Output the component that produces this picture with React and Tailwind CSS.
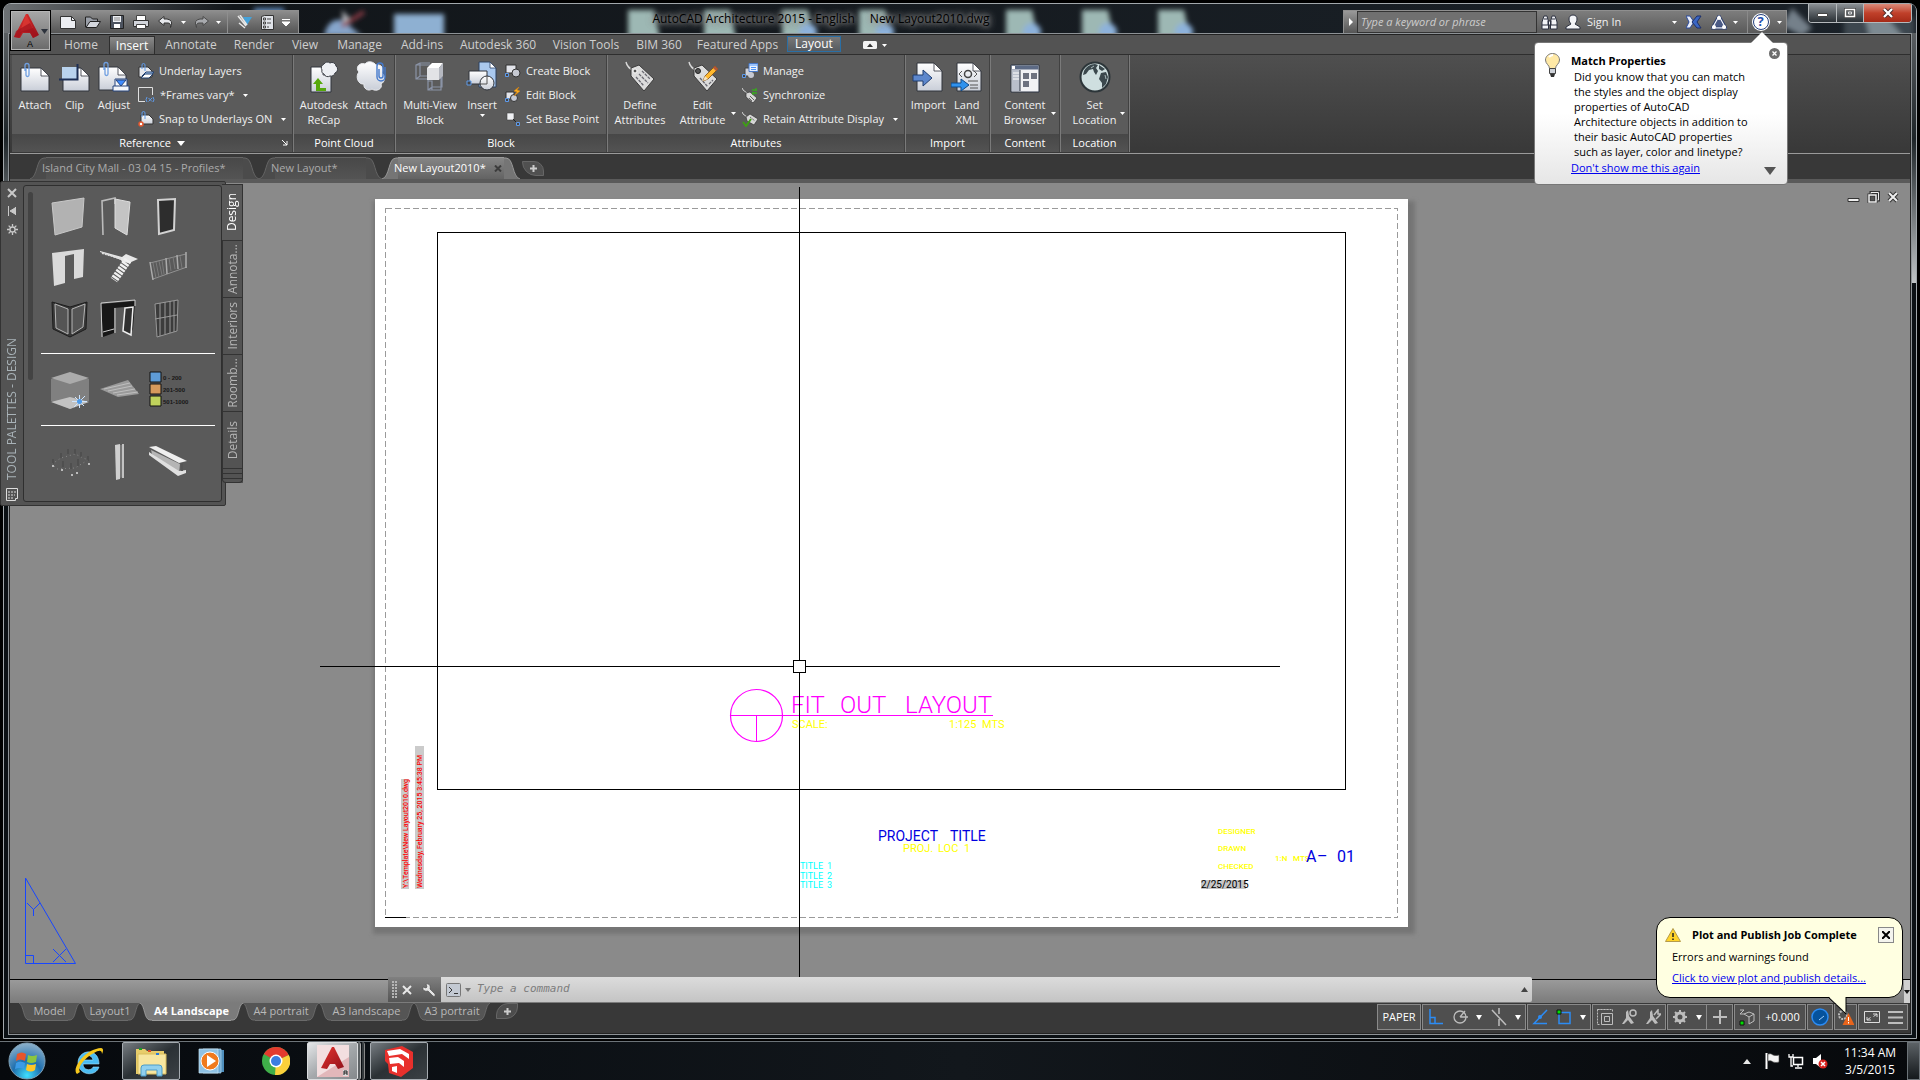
import React from "react";

function Icon({ w = 16, h, vb, children, className = "" }) {
  const hh = h || w;
  return (
    <svg width={w} height={hh} viewBox={vb || `0 0 ${w} ${hh}`} fill="none" aria-hidden="true" className={`shrink-0 ${className}`}>
      {children}
    </svg>
  );
}

const Caret = ({ className = "" }) => (
  <Icon w={5} h={3} className={className}>
    <path d="M0 0h5L2.500 3z" fill="#fff" />
  </Icon>
);

const Page = ({ x = 0, y = 0, w = 28, h = 23, fill = "url(#pageFill)" }) => (
  <g transform={`translate(${x} ${y})`}>
    <path d={`M0 0h${w - 8}l8 8v${h - 8}H0z`} fill={fill} stroke="#30343c" />
    <path d={`M${w - 8} 0v8h8z`} fill="#fff" stroke="#30343c" strokeWidth=".8" />
  </g>
);

const Clip = ({ x = 0, y = 0, c = "#6f9fe0" }) => (
  <path transform={`translate(${x} ${y})`} d="M0 8V2.500a2 2 0 0 1 4 0V12a1.500 1.500 0 0 1-3 0V5" stroke={c} strokeWidth="1.300" />
);

function Defs() {
  return (
    <svg width="0" height="0" className="absolute" aria-hidden="true">
      <defs>
        <linearGradient id="pageFill" x1="0" y1="0" x2="0" y2="1">
          <stop offset="0" stopColor="#fff" />
          <stop offset="1" stopColor="#c9ced8" />
        </linearGradient>
        <linearGradient id="redA" x1="0" y1="0" x2="1" y2="1">
          <stop offset="0" stopColor="#e5352f" />
          <stop offset="1" stopColor="#93101a" />
        </linearGradient>
        <radialGradient id="orb" cx=".5" cy=".9" r=".9">
          <stop offset="0" stopColor="#3fe0ff" />
          <stop offset=".45" stopColor="#1f6fae" />
          <stop offset="1" stopColor="#8fb2cb" />
        </radialGradient>
      </defs>
    </svg>
  );
}

/* ---------- Large ribbon icons ---------- */
const big = {
  attach: (
    <Icon w={32}>
      <Page x={2} y={7} />
      <Clip x={6} y={2} />
    </Icon>
  ),
  clip: (
    <Icon w={32}>
      <Page x={4} y={7} w={26} />
      <path d="M3 6h15v12H3z" fill="#b9d3ee" />
      <path d="M0 18.500h18.500V3" stroke="#1d2f55" strokeWidth="2" />
    </Icon>
  ),
  adjust: (
    <Icon w={32}>
      <Page x={1} y={6} w={27} />
      <Clip x={6} y={1} />
      <path d="M17 18h12v8H17z" fill="#f4f6fa" stroke="#26447c" />
      <path d="M15 25h16v5H15z" fill="#f4f6fa" stroke="#26447c" />
      <path d="M18 19h10l-5 6z" fill="#3e8bff" stroke="#26447c" />
    </Icon>
  ),
  recap: (
    <Icon w={32}>
      <Page x={3} y={6} w={20} h={25} />
      <path d="M14 9a4 4 0 0 1 2-6 4 4 0 0 1 6-1 4 4 0 0 1 6 3 4 4 0 0 1-1 7 4 4 0 0 1-5 3 4 4 0 0 1-6-2 3 3 0 0 1-2-4z" fill="#eef0f4" stroke="#3a3d44" />
      <path d="M10 17l5 6h-3v4h6v3H8v-7H5z" fill="#56a80c" />
    </Icon>
  ),
  cloud: (
    <Icon w={32}>
      <path d="M4 11C0 7 4 1 10 3c3-4 9-2 11 1 6-1 8 4 6 8 4 3 3 9-1 11 2 5-5 8-9 5-4 3-9-1-8-5-6 1-9-8-5-12z" fill="url(#pageFill)" stroke="#e8eaee" />
      <path d="M24 8v7a2 2 0 0 0 4 0V5a3 3 0 0 0-6 0v11a4 4 0 0 0 8 0V6" stroke="#4379cc" strokeWidth="1.400" />
    </Icon>
  ),
  multi: (
    <Icon w={32}>
      <path d="M2 4h14v14H2zM2 4l4-2h10M2 18l4-3h8M6 2v13M14 17h13v12H14zM14 20h4v9M27 17v12M14 29l4-3h10V14" stroke="#8a93a6" strokeWidth="1.200" />
      <path d="M13 7l5-5h11l-4 5z" fill="#fff" />
      <path d="M13 7h12v12H13z" fill="#e2e3e6" />
      <path d="M25 7l4-5v13l-4 4z" fill="#b5b8c0" />
    </Icon>
  ),
  insert: (
    <Icon w={32}>
      <path d="M13 1h11l6 6v19H13z" fill="#a9c8ee" stroke="#2c405f" />
      <path d="M24 1v6h6z" fill="#fff" stroke="#2c405f" strokeWidth=".8" />
      <path d="M3 10h18v13H3z" fill="url(#pageFill)" stroke="#30343c" />
      <circle cx="21" cy="22" r="7" fill="url(#pageFill)" stroke="#30343c" />
      <path d="M1 20h4v4H1z" fill="#444" stroke="#5f9bea" />
      <path d="M21 15v8h-7" stroke="#555" />
    </Icon>
  ),
  tag: (
    <Icon w={32}>
      <path d="M2 1c1 5 4 7 8 9" stroke="#d8d8d8" strokeWidth="1.400" />
      <path d="M7 7l8-3 15 14-10 12L7 15z" fill="#dcdcdc" stroke="#3a3a3a" />
      <circle cx="11" cy="10" r="2" fill="#555" stroke="#fff" />
      <path d="M12 16l8 9M15 13l9 9M18 10l8 8" stroke="#6a6a72" strokeWidth="1.300" strokeDasharray="3 1" />
    </Icon>
  ),
  tagEdit: (
    <Icon w={32}>
      <path d="M2 1c1 5 4 7 8 9" stroke="#d8d8d8" strokeWidth="1.400" />
      <path d="M7 7l8-3 15 14-10 12L7 15z" fill="#dcdcdc" stroke="#3a3a3a" />
      <circle cx="11" cy="10" r="2.500" fill="#555" stroke="#222" />
      <path d="M13 17l8 9M22 23l4-4" stroke="#6a6a72" strokeWidth="1.300" strokeDasharray="3 1" />
      <path d="M16 20l2-5L28 5l3 3-10 10z" fill="#ffb92e" stroke="#7c4a10" strokeWidth=".8" />
      <path d="M26 7l2-2 3 3-2 2z" fill="#b1563b" />
      <path d="M16 20l2-5 3 3z" fill="#f5e3c1" />
    </Icon>
  ),
  import: (
    <Icon w={32}>
      <Page x={5} y={2} w={25} h={28} />
      <path d="M1 14h10V9l9 8-9 8v-5H1z" fill="#5d87cc" stroke="#213e70" />
    </Icon>
  ),
  land: (
    <Icon w={32}>
      <Page x={6} y={2} w={24} h={28} />
      <circle cx="17" cy="13" r="3.500" stroke="#444" strokeWidth="1.500" />
      <path d="M11 10l-3 3 3 3M23 10l3 3-3 3M17 20h10M19 24h8M19 27h8" stroke="#555" />
      <path d="M0 22h10v-4l8 6-8 6v-4H0z" fill="#2f92ee" stroke="#124a86" />
    </Icon>
  ),
  content: (
    <Icon w={32}>
      <path d="M2 4h28v27H2z" fill="#f1f2f5" stroke="#2d3542" />
      <path d="M2.500 4.500h27v4h-27z" fill="#5c6a85" />
      <path d="M3 5h3v3H3z" fill="#fff" />
      <path d="M3 9h8v21H3z" fill="#b9bfcb" />
      <path d="M11 9v21" stroke="#2d3542" />
      <path d="M4 12h6M4 15h6M4 18h6" stroke="#fff" />
      <path d="M14 12h6v6h-6zM22 12h6v6h-6zM14 20h6v6h-6z" fill="#6d7280" />
    </Icon>
  ),
  globe: (
    <Icon w={32}>
      <circle cx="16" cy="16" r="14.500" fill="#cfdfe0" stroke="#2c3539" strokeWidth="2" />
      <path d="M5 10c2-4 6-7 11-7l3 1-2 3 2 3-2 4-2-3-1-3-4 1-3 4-3 1zM20 4l6 4-3 2-3-2zM22 12l5-1 2 5-2 7-4 4 0-5-3-4z" fill="#3b484d" />
      <path d="M15 5l-3 2M26 14l1 4" stroke="#a8b8ba" />
    </Icon>
  ),
};

/* ---------- Small ribbon icons ---------- */
const small = {
  layers: (
    <Icon w={16}>
      <path d="M1 4h9l4 4v6H1z" fill="#e6e8ee" stroke="#333" />
      <path d="M4 13l4-4h8l-4 5z" fill="#a6c6ee" stroke="#22406f" />
      <path d="M3 15l4-4h8l-4 4z" fill="#fff" stroke="#22406f" />
      <path d="M4 6V2a1.500 1.500 0 0 1 3 0v6" stroke="#5f9bea" />
    </Icon>
  ),
  frames: (
    <Icon w={17} h={16}>
      <path d="M7 14.500H.5V.5h14V8" stroke="#e0e0e0" />
      <path d="M9 10q-2 3 0 5M15 10q2 3 0 5M10.500 11l3.500 3.500M14 11l-3.500 3.500" stroke="#5f9bea" />
    </Icon>
  ),
  snap: (
    <Icon w={16}>
      <path d="M3 4h8l4 4v5H3z" fill="url(#pageFill)" stroke="#333" />
      <path d="M4 6V2a1.500 1.500 0 0 1 3 0v6" stroke="#5f9bea" />
      <circle cx="3" cy="13" r="2" fill="#fff" stroke="#e4572e" strokeWidth="1.500" />
    </Icon>
  ),
  create: (
    <Icon w={16}>
      <path d="M1 2h10v8H1z" fill="#e2e4ea" stroke="#333" />
      <circle cx="11" cy="10" r="4" fill="#c6c9d2" stroke="#333" />
      <path d="M.5 10.500h3v3h-3z" fill="#444" stroke="#5f9bea" />
    </Icon>
  ),
  edit: (
    <Icon w={16}>
      <path d="M1 5h8v7H1z" fill="#e2e4ea" stroke="#333" />
      <circle cx="9" cy="11" r="3.500" fill="#c6c9d2" stroke="#333" />
      <path d="M.5 11.500h3v3h-3z" fill="#444" stroke="#5f9bea" />
      <path d="M14 0l-5 4 3 1-3 4 6-5-3-1z" fill="#ffb21e" stroke="#d7820f" strokeWidth=".6" />
    </Icon>
  ),
  base: (
    <Icon w={16}>
      <path d="M2 2h7v7H2z" fill="#f0f1f4" stroke="#444" strokeWidth=".6" />
      <path d="M8 8l5 5" stroke="#222" />
      <path d="M11.500 11.500h3v3h-3z" fill="#444" stroke="#5f9bea" />
    </Icon>
  ),
  manage: (
    <Icon w={16}>
      <path d="M3 5h7v8H3z" fill="#cfd2da" stroke="#444" />
      <path d="M.5 11.500h3v3h-3z" fill="#444" stroke="#5f9bea" />
      <circle cx="9" cy="12" r="3" fill="#c6c9d2" />
      <path d="M7 .5h9v8H7z" fill="#e8f0fc" stroke="#4879c8" />
      <path d="M7 2h9M9 4.500h5M9 6.500h5" stroke="#4d94f7" />
    </Icon>
  ),
  sync: (
    <Icon w={16}>
      <path d="M0 1c1 3 3 3 5 5" stroke="#ddd" />
      <path d="M4 6l4-1 7 6-4 5-7-6z" fill="#d6d6d6" stroke="#333" strokeWidth=".7" />
      <path d="M8 9l4 4M7 11l3 3" stroke="#666" />
      <path d="M10 3h5M14 1v3M15 6h-5M11 8V5" stroke="#39a81f" strokeWidth="1.300" />
    </Icon>
  ),
  retain: (
    <Icon w={16}>
      <path d="M0 1c1 3 3 3 5 5" stroke="#ddd" />
      <path d="M4 6l4-3 8 5-4 6-7-4z" fill="#d6d6d6" stroke="#333" strokeWidth=".7" />
      <path d="M8 6l5 4" stroke="#666" strokeDasharray="2 1" />
      <path d="M1 11l3 4 5-7" stroke="#3f9d16" strokeWidth="2" />
    </Icon>
  ),
};

function BigButton({ icon, lines, caret, width }) {
  return (
    <button type="button" className={`relative flex flex-col items-center pt-1.5 leading-[15px] ${width}`}>
      {big[icon]}
      <span className="mt-1 flex flex-col items-center whitespace-nowrap text-[#f0f0f0]">
        {lines.map((l) => (
          <span key={l}>{l}</span>
        ))}
      </span>
      {caret === "side" && <Caret className="absolute right-0 top-[57px]" />}
      {caret === "below" && <Caret className="mt-[2px]" />}
    </button>
  );
}

function SmallButton({ icon, label, caret }) {
  return (
    <button type="button" className="flex h-6 items-center gap-[5px] whitespace-nowrap text-[#f0f0f0]">
      {small[icon]}
      <span>{label}</span>
      {caret && <Caret className="ml-1" />}
    </button>
  );
}

function Panel({ title, width, caret, launcher, children }) {
  return (
    <section className={`flex shrink-0 flex-col border-r border-[#7a7a7a] bg-[#5b5b5b] ${width}`}>
      <div className="flex flex-1 items-start border-r border-[#414141] px-[3px]">{children}</div>
      <h2 className="relative flex h-[18px] items-center justify-center gap-1.5 border-r border-[#414141] bg-gradient-to-b from-[#474747] to-[#535353] text-white">
        {title}
        {caret && (
          <Icon w={8} h={5}>
            <path d="M0 0h8L4 5z" fill="#fff" />
          </Icon>
        )}
        {launcher && (
          <Icon w={7} className="absolute bottom-1.5 right-1">
            <path d="M1 1l5 5M6 2v4H2" stroke="#fff" />
          </Icon>
        )}
      </h2>
    </section>
  );
}

const Col = ({ children, className = "" }) => <div className={`flex flex-col pt-1 ${className}`}>{children}</div>;

function Ribbon() {
  return (
    <div className="flex h-[99px] border-b border-[#9a9a9a] bg-gradient-to-b from-[#4f4f4f] to-[#383838] pl-[2px] pb-px">
      <Panel title="Reference" width="w-[282px]" caret launcher>
        <BigButton icon="attach" lines={["Attach"]} width="w-[40px]" />
        <BigButton icon="clip" lines={["Clip"]} width="w-[39px]" />
        <BigButton icon="adjust" lines={["Adjust"]} width="w-[40px]" />
        <Col className="pl-1">
          <SmallButton icon="layers" label="Underlay Layers" />
          <SmallButton icon="frames" label="*Frames vary*" caret />
          <SmallButton icon="snap" label="Snap to Underlays ON" caret />
        </Col>
      </Panel>
      <Panel title="Point Cloud" width="w-[102px]">
        <BigButton icon="recap" lines={["Autodesk", "ReCap"]} width="w-[56px]" />
        <BigButton icon="cloud" lines={["Attach"]} width="w-[42px]" />
      </Panel>
      <Panel title="Block" width="w-[212px]">
        <BigButton icon="multi" lines={["Multi-View", "Block"]} width="w-[62px]" />
        <BigButton icon="insert" lines={["Insert"]} caret="below" width="w-[42px]" />
        <Col className="pl-0.5">
          <SmallButton icon="create" label="Create Block" />
          <SmallButton icon="edit" label="Edit Block" />
          <SmallButton icon="base" label="Set Base Point" />
        </Col>
      </Panel>
      <Panel title="Attributes" width="w-[298px]">
        <BigButton icon="tag" lines={["Define", "Attributes"]} width="w-[58px]" />
        <BigButton icon="tagEdit" lines={["Edit", "Attribute"]} caret="side" width="w-[67px]" />
        <Col className="pl-1.5">
          <SmallButton icon="manage" label="Manage" />
          <SmallButton icon="sync" label="Synchronize" />
          <SmallButton icon="retain" label="Retain Attribute Display" caret />
        </Col>
      </Panel>
      <Panel title="Import" width="w-[85px]">
        <BigButton icon="import" lines={["Import"]} width="w-[41px]" />
        <BigButton icon="land" lines={["Land", "XML"]} width="w-[41px]" />
      </Panel>
      <Panel title="Content" width="w-[70px]">
        <BigButton icon="content" lines={["Content", "Browser"]} caret="side" width="w-[62px]" />
      </Panel>
      <Panel title="Location" width="w-[69px]">
        <BigButton icon="globe" lines={["Set", "Location"]} caret="side" width="w-[63px]" />
      </Panel>
    </div>
  );
}

/* ---------- Title bar ---------- */
function TitleBackdrop() {
  return (
    <svg className="absolute inset-0 h-full w-full" aria-hidden="true">
      <defs>
        <filter id="soft" x="-20%" y="-50%" width="140%" height="200%">
          <feGaussianBlur stdDeviation="2.500" />
        </filter>
      </defs>
      <g filter="url(#soft)">
        <path d="M320 32q4-18 18-16l20 16z" fill="#86a6cc" />
        <path d="M338 6l10 12-8 6z" fill="#c9ccd2" />
        <path d="M338 22l22-14" stroke="#8a3a44" strokeWidth="4" />
        <rect x="390" y="10" width="50" height="24" fill="#8eb0d2" />
        <rect x="250" y="4" width="30" height="8" fill="#5f88b8" />
        {[624, 700, 778, 855, 1002, 1078, 1154].map((x, i) => (
          <g key={x}>
            <path d={`M${x} 6h26l6 28h-32z`} fill="#9db8b4" />
            {i > 1 && <circle cx={x + 26} cy="28" r="9" fill="#8db2dc" />}
          </g>
        ))}
        <path d="M1788 4l20 20-10 8-20-10z" fill="#74808a" />
        <rect x="1840" y="14" width="70" height="20" fill="#3d474f" />
        <path d="M1860 10h20l20 24h-34z" fill="#7d8a92" />
      </g>
    </svg>
  );
}

function QuickAccess() {
  const b = "flex h-full items-center justify-center";
  return (
    <nav aria-label="Quick access" className="mt-1.5 flex h-[23px] w-[249px] items-center border border-b-0 border-[#8f8f8f] bg-gradient-to-b from-[#8d8d8d] to-[#555]">
      <button type="button" aria-label="New" className={`${b} w-[35px]`}>
        <Icon w={16} h={14}><path d="M.5 1.500h11l4 4v8H.5z" fill="#eceef2" stroke="#333" /><path d="M11.500 1.500v4h4" stroke="#333" /></Icon>
      </button>
      <button type="button" aria-label="Open" className={`${b} w-[15px]`}>
        <Icon w={16} h={14}><path d="M.5 12V2h5l2 2h5v2" fill="#9a9fa8" stroke="#222" /><path d="M1 12.500l4-6h10.500l-4 6z" fill="#d5d8de" stroke="#222" /></Icon>
      </button>
      <button type="button" aria-label="Save" className={`${b} w-[35px]`}>
        <Icon w={14}><path d="M.5.5h13v13H.5z" fill="#4d5460" stroke="#222" /><path d="M3 1h8v6H3z" fill="#eef0f4" /><path d="M4 9h6v4H4z" fill="#fff" /><path d="M4 3h6M4 5h6" stroke="#888" /></Icon>
      </button>
      <button type="button" aria-label="Plot" className={`${b} w-[14px]`}>
        <Icon w={16} h={14}><path d="M3.500.5h9v5h-9z" fill="#fff" stroke="#444" /><path d="M.5 5.500h15v6H.5z" fill="#d2d5db" stroke="#333" /><path d="M3.500 9.500h9v4h-9z" fill="#fff" stroke="#444" /></Icon>
      </button>
      <button type="button" aria-label="Undo" className={`${b} w-[36px]`}>
        <Icon w={15} h={12}><path d="M6 .5L.5 5 6 9.500V7h4q3 0 2.500 4.500Q16 4 9 3H6z" fill="#e6e8ec" stroke="#333" /></Icon>
      </button>
      <button type="button" aria-label="Undo history" className={`${b} w-[1px]`}><Caret /></button>
      <button type="button" aria-label="Redo" className={`${b} w-[35px]`}>
        <Icon w={15} h={12}><path d="M9 .5L14.500 5 9 9.500V7H5q-3 0-2.500 4.500Q-1 4 6 3h3z" fill="#a7a9ad" stroke="#4a4a4a" /></Icon>
      </button>
      <button type="button" aria-label="Redo history" className={`${b} w-[1px]`}><Caret /></button>
      <span className="ml-2 h-full w-px bg-[#8f8f8f]" />
      <button type="button" aria-label="Workspace" className={`${b} w-[34px]`}>
        <Icon w={16} h={14}><path d="M6 2h9l-5 8z" fill="#45a2da" /><path d="M1 1l8 10M3 0l7 10M2 8l6 5" stroke="#e6e6e6" strokeWidth="1.500" /></Icon>
      </button>
      <button type="button" aria-label="Properties" className={`${b} w-[14px]`}>
        <Icon w={13} h={15}><path d="M.5 1.500l3-1h9v14H.5z" fill="#dfe2e8" stroke="#333" /><path d="M2.500 3h2v2h-2zM2.500 7h2v2h-2zM2.500 11h2v2h-2zM6 4h4M6 8h4M6 12h2" stroke="#444" /></Icon>
      </button>
      <button type="button" aria-label="Customize" className={`${b} w-[24px]`}>
        <Icon w={8} h={7}><path d="M0 .5h8M0 3h8L4 7z" fill="#fff" stroke="#fff" /></Icon>
      </button>
    </nav>
  );
}

function InfoBar() {
  return (
    <div className="mt-1.5 flex h-[23px] w-[444px] border border-b-0 border-[#8f8f8f] bg-gradient-to-b from-[#7d7d7d] to-[#5a5a5a] text-[#f0f0f0]">
      <button type="button" aria-label="Collapse search" className="flex w-[13px] items-center justify-center bg-gradient-to-b from-[#999] to-[#555]">
        <Icon w={4} h={8}><path d="M0 0v8l4-4z" fill="#fff" /></Icon>
      </button>
      <input aria-label="Search" placeholder="Type a keyword or phrase" className="w-[180px] border border-[#333] bg-[#707070] px-[3px] italic text-[#c4c4c4] outline-none placeholder:text-[#cdcdcd]" />
      <button type="button" aria-label="Find" className="flex w-6 items-center justify-center">
        <Icon w={17} h={16}>
          <path d="M1 15V8l2-6h3l1.500 6v7zM9.500 15V8L11 2h3l2 6v7zM7 7h3v4H7z" fill="#f2f3f7" stroke="#2c3140" />
          <path d="M1 11h6M10 11h6M3 5h3M11 5h3" stroke="#2c3140" />
        </Icon>
      </button>
      <button type="button" className="flex w-[116px] items-center gap-1.5 pl-1 text-left">
        <Icon w={16}><path d="M8 1c3 0 4 2 4 4s-1 4-2 5l5 3v2H1v-2l5-3C5 9 4 7 4 5s1-4 4-4z" fill="#f2f3f7" stroke="#2c3140" /></Icon>
        <span className="flex-1">Sign In</span>
        <Caret />
      </button>
      <button type="button" aria-label="Exchange" className="flex w-8 items-center justify-center pl-0.5">
        <Icon w={16} h={14}><path d="M0 1h4l4 6-4 6H0l3-6z" fill="#e9eefa" stroke="#2b4a9b" /><path d="M15 1h-4L6 7l5 6h4l-4-6z" fill="#3a66c4" stroke="#1c2f6b" /></Icon>
      </button>
      <button type="button" aria-label="Connect" className="flex w-[30px] items-center justify-center gap-1.5">
        <Icon w={16} h={15}><path d="M8 3L3 12h10z" stroke="#2b3d6e" strokeWidth="5" /><path d="M8 3L3 12h10z" stroke="#f2f5fb" strokeWidth="3" /><path d="M8 3L3 12h10z" fill="#4a5a86" stroke="#2b3d6e" strokeWidth=".6" /><circle cx="8" cy="3" r="2" fill="#fff" /><circle cx="3" cy="12" r="2" fill="#fff" /><circle cx="13" cy="12" r="2" fill="#fff" /></Icon>
        <Caret />
      </button>
      <span className="ml-2 h-full w-px bg-[#8a8a8a]" />
      <button type="button" aria-label="Help" className="flex flex-1 items-center justify-center gap-2">
        <span className="flex h-4 w-4 items-center justify-center rounded-full border border-[#24407c] bg-white text-[13px] font-bold text-[#1f4fae] ring-1 ring-white">?</span>
        <Caret />
      </button>
    </div>
  );
}

function TitleBar() {
  return (
    <header className="relative flex h-[29px] items-start overflow-hidden rounded-t-md bg-gradient-to-r from-[#6d7174] via-[#12161a] via-[12%] to-[#1b2229] pl-[46px] pr-1">
      <TitleBackdrop />
      <div className="relative flex w-full items-start">
        <QuickAccess />
        <h1 className="mt-1.5 flex flex-1 justify-center gap-[15px] whitespace-nowrap text-[12px] leading-[17px] text-black [text-shadow:0_0_5px_#999,0_0_8px_#999,0_0_10px_#888]">
          <span>AutoCAD Architecture 2015 - English</span>
          <span>New Layout2010.dwg</span>
        </h1>
        <InfoBar />
        <div className="ml-[21px] flex h-[19px] w-[104px] overflow-hidden rounded-b-[4px] border border-t-0 border-[#b5b9bc]">
          <button type="button" aria-label="Minimize" className="flex flex-1 items-center justify-center border-r border-[#b5b9bc] bg-gradient-to-b from-[#8b9094] to-[#2a3035]">
            <Icon w={11} h={5} className="mt-1"><path d="M.5.5h10v3H.5z" fill="#fff" stroke="#444" /></Icon>
          </button>
          <button type="button" aria-label="Restore" className="flex w-[27px] items-center justify-center border-r border-[#b5b9bc] bg-gradient-to-b from-[#8b9094] to-[#2a3035]">
            <Icon w={12} h={10}><path d="M1.500 1.500h9v7h-9z" stroke="#444" strokeWidth="3" /><path d="M1.500 1.500h9v7h-9z" stroke="#fff" strokeWidth="1.500" /><path d="M4.500 4h3v2h-3z" stroke="#ddd" /></Icon>
          </button>
          <button type="button" aria-label="Close" className="flex w-[47px] items-center justify-center bg-gradient-to-b from-[#d98a7a] via-[#c0402a] to-[#a52a17]">
            <Icon w={12} h={10}><path d="M2 1l8 8M10 1L2 9" stroke="#4a2a2a" strokeWidth="4" /><path d="M2 1l8 8M10 1L2 9" stroke="#fff" strokeWidth="2.300" /></Icon>
          </button>
        </div>
      </div>
    </header>
  );
}

const ribbonTabs = [
  ["Home", "w-[56px]"], ["Insert", "w-[46px]"], ["Annotate", "w-[72px]"], ["Render", "w-[54px]"],
  ["View", "w-[48px]"], ["Manage", "w-[61px]"], ["Add-ins", "w-[64px]"], ["Autodesk 360", "w-[88px]"],
  ["Vision Tools", "w-[88px]"], ["BIM 360", "w-[58px]"], ["Featured Apps", "w-[99px]"], ["Layout", "w-[54px]"],
];

function RibbonTabs() {
  return (
    <nav aria-label="Ribbon tabs" className="flex h-5 items-end border-b border-[#2e2e2e] bg-[#535353] pl-[43px] text-[12px]">
      {ribbonTabs.map(([t, w]) => {
        const look =
          t === "Insert"
            ? "h-[18px] border border-b-0 border-[#2e2e2e] bg-gradient-to-b from-[#8a8a8a] to-[#5b5b5b] text-white"
            : t === "Layout"
              ? "mb-[2px] h-4 border border-[#2a6fa5] bg-gradient-to-b from-[#787878] to-[#565b60] text-white"
              : "h-[18px] text-[#cfcfcf]";
        return (
          <button key={t} type="button" className={`flex shrink-0 items-center justify-center whitespace-nowrap ${w} ${look}`}>
            {t}
          </button>
        );
      })}
      <button type="button" aria-label="Minimize ribbon" className="ml-[22px] flex h-[18px] items-center gap-[5px]">
        <Icon w={14} h={8}><rect width="14" height="8" rx="1.500" fill="#f4f4f4" /><path d="M4 6h6L7 2.500z" fill="#333" /></Icon>
        <Caret />
      </button>
    </nav>
  );
}

function AppButton() {
  return (
    <button type="button" aria-label="Application menu" className="absolute left-[10px] top-[10px] z-10 flex h-[41px] w-[41px] flex-col border border-black bg-gradient-to-b from-[#a8a8a8] via-[#8b8b8b] to-[#6a6a6a] ring-1 ring-inset ring-[#b5b5b5]">
      <Icon w={32} h={26} className="mt-[2px]">
        <path d="M15 1h2l11 21-6 3-3-5h-7l-3 5-6-1z" fill="url(#redA)" />
        <path d="M15 1l-6 18 13-4z" fill="#e03a35" opacity=".7" />
        <path d="M5 18l14-8 7 13-4 2-3-6h-8l-3 6-5-1z" fill="#a3131c" opacity=".7" />
      </Icon>
      <Icon w={7} h={5} className="absolute right-[2px] top-[18px]"><path d="M0 0h7L3.500 5z" fill="#2d333d" /></Icon>
      <span className="absolute bottom-[1px] left-[16px] font-['Liberation_Sans'] text-[9px] leading-[9px] text-black">A</span>
    </button>
  );
}

/* ---------- Document tabs ---------- */
function FileTab({ label, width, active }) {
  return (
    <div className={`relative flex h-[22px] items-center ${width}`}>
      <svg className="absolute inset-y-0 left-0 h-full w-4" viewBox="0 0 16 22" preserveAspectRatio="none" aria-hidden="true">
        <path d="M0 22C8 20 6 1 14 1h2v21z" fill={active ? "#757575" : "#4b4b4b"} />
        <path d="M0 22C8 20 6 1 14 1h2" fill="none" stroke={active ? "#999" : "#656565"} />
      </svg>
      <div className={`absolute inset-y-0 left-4 right-4 border-t ${active ? "border-[#999] bg-gradient-to-b from-[#858585] to-[#636363]" : "border-[#656565] bg-gradient-to-b from-[#484848] to-[#545454]"}`} />
      <svg className="absolute inset-y-0 right-0 h-full w-4" viewBox="0 0 16 22" preserveAspectRatio="none" aria-hidden="true">
        <path d="M16 22C8 20 10 1 2 1H0v21z" fill={active ? "#757575" : "#4b4b4b"} />
        <path d="M16 22C8 20 10 1 2 1H0" fill="none" stroke={active ? "#999" : "#656565"} />
      </svg>
      <button type="button" className={`relative whitespace-nowrap pl-3 ${active ? "text-white" : "text-[#ababab]"}`}>{label}</button>
      {active && (
        <button type="button" aria-label="Close tab" className="absolute right-[18px] top-2">
          <Icon w={8} h={7}><path d="M1 .5l6 6M7 .5l-6 6" stroke="#3c3c3c" strokeWidth="2" /></Icon>
        </button>
      )}
    </div>
  );
}

function FileTabs() {
  return (
    <div className="flex h-[29px] items-start border-b-4 border-[#5a5a5a] bg-[#383838] pl-5 pt-[3px]">
      <FileTab label="Island City Mall - 03 04 15 - Profiles*" width="w-[229px]" />
      <FileTab label="New Layout*" width="w-[123px]" />
      <FileTab label="New Layout2010*" width="w-[138px]" active />
      <button type="button" aria-label="New tab" className="ml-0.5 mt-1 flex h-[15px] w-[22px] items-center justify-center rounded-bl-[14px] rounded-tr-[10px] border border-[#666] bg-[#505050]">
        <Icon w={7}><path d="M3.500 0v7M0 3.500h7" stroke="#ccc" strokeWidth="2" /></Icon>
      </button>
    </div>
  );
}

/* ---------- Drawing sheet ---------- */
function Words({ x, y, words, size, fill }) {
  return words.map(([t, dx]) => (
    <text key={t + dx} x={x + dx} y={y} fontSize={size} fill={fill}>{t}</text>
  ));
}

function Sheet() {
  return (
    <svg width="1900" height="796" viewBox="10 183 1900 796" className="block shrink-0" fill="none" role="img" aria-label="Layout sheet" fontFamily="Roboto, sans-serif" shapeRendering="crispEdges">
      <defs>
        <filter id="sheetShadow" x="-2%" y="-2%" width="104%" height="104%"><feGaussianBlur stdDeviation="2" /></filter>
      </defs>
      <rect x="373" y="201" width="1042" height="733" fill="#757575" filter="url(#sheetShadow)" />
      <rect x="375" y="199" width="1033" height="728" fill="#fff" />
      <rect x="385.500" y="208.500" width="1012" height="709" stroke="#9a9a9a" strokeDasharray="6 3" />
      <path d="M385 917.500h21" stroke="#000" />
      <rect x="437.500" y="232.500" width="908" height="557" stroke="#000" />
      <g stroke="#ff00ff" shapeRendering="auto">
        <circle cx="756.500" cy="715.500" r="26" strokeWidth="1.200" />
        <path d="M730 715.500h263M756.500 716v25" />
      </g>
      <g fontWeight="300">
        <Words x={791} y={713} size="24" fill="#ff00ff" words={[["FIT", 0], ["OUT", 49], ["LAYOUT", 114]]} />
      </g>
      <Words x={792} y={728} size="11" fill="#ffff00" words={[["SCALE:", 0], ["1:125", 157], ["MTS", 190]]} />
      <Words x={878} y={841} size="14" fill="#0000e0" words={[["PROJECT", 0], ["TITLE", 72]]} />
      <Words x={903} y={852} size="11" fill="#ffff00" words={[["PROJ.", 0], ["LOC", 35], ["1", 61]]} />
      <Words x={800} y={869} size="9" fill="#00ffff" words={[["TITLE", 0], ["1", 27]]} />
      <Words x={800} y={879} size="9" fill="#00ffff" words={[["TITLE", 0], ["2", 27]]} />
      <Words x={800} y={888} size="9" fill="#00ffff" words={[["TITLE", 0], ["3", 27]]} />
      <g fontWeight="500">
        <Words x={1218} y={834} size="8" fill="#ffff00" words={[["DESIGNER", 0]]} />
        <Words x={1218} y={851} size="8" fill="#ffff00" words={[["DRAWN", 0]]} />
        <Words x={1218} y={869} size="8" fill="#ffff00" words={[["CHECKED", 0]]} />
        <Words x={1275} y={861} size="8" fill="#ffff00" words={[["1:N", 0], ["MTS", 18]]} />
      </g>
      <Words x={1306} y={862} size="16" fill="#0000e0" words={[["A", 0], ["–", 11], ["01", 31]]} />
      <rect x="1201" y="880" width="45" height="9" fill="#c6c6c6" />
      <Words x={1201} y={888} size="10" fill="#000" words={[["2/25/2015", 0]]} />
      <rect x="401" y="779" width="8" height="110" fill="#cbcbcb" />
      <rect x="415" y="746" width="9" height="143" fill="#cbcbcb" />
      <g fill="#ff0000" fontWeight="500">
        <text transform="translate(408 888) rotate(-90)" fontSize="7">Y:\Template\New Layout2010.dwg</text>
        <text transform="translate(422 888) rotate(-90)" fontSize="7">Wednesday, February 25, 2015 3:45:38 PM</text>
      </g>
      <path d="M320 666.500h473M806 666.500h474M799.500 187v473M799.500 673v304" stroke="#000" />
      <rect x="793.500" y="660.500" width="12" height="12" stroke="#000" />
      <g stroke="#1746ff" shapeRendering="auto">
        <path d="M25.500 878v85.500h50z" />
        <path d="M25.500 955.500h8v8M27 903l6.500 6.500L40 903M33.500 909v7M53 949l13 13M66 949l-13 13" />
      </g>
    </svg>
  );
}

function Workspace() {
  return (
    <main className="relative flex-1 overflow-hidden bg-[#8a8a8a]">
      <Sheet />
      <div className="absolute right-[11px] top-[8px] flex items-center gap-[7px]">
        <button type="button" aria-label="Minimize drawing">
          <Icon w={13} h={12}><path d="M1 7.500h11v3H1z" fill="#eee" stroke="#333" /></Icon>
        </button>
        <button type="button" aria-label="Restore drawing">
          <Icon w={13} h={12}><path d="M4 3V1.500h7.500V9H10" stroke="#333" strokeWidth="3" /><path d="M4 3V1.500h7.500V9H10" stroke="#eee" /><path d="M2 4h7v7H2z" fill="#555" stroke="#333" strokeWidth="3" /><path d="M2 4h7v7H2z" stroke="#eee" strokeWidth="1.500" /></Icon>
        </button>
        <button type="button" aria-label="Close drawing">
          <Icon w={12}><path d="M2 2l8 8M10 2l-8 8" stroke="#333" strokeWidth="4" /><path d="M2 2l8 8M10 2l-8 8" stroke="#eee" strokeWidth="2" /></Icon>
        </button>
      </div>
    </main>
  );
}

/* ---------- Tool palette ---------- */
const tools = [
  <g key="wall"><path d="M1 6l32-5-2 29L4 38z" fill="#b2b2b2" stroke="#c8c8c8" /></g>,
  <g key="door"><path d="M3 38L2 4l13-3v6" stroke="#bbb" strokeWidth="1.600" /><path d="M15 2l15 3-3 33-12-7z" fill="#c4c4c4" stroke="#ddd" /></g>,
  <g key="window"><path d="M9 3l17-1-1 31-15 4z" fill="#2d2d2d" stroke="#d2d2d2" strokeWidth="2" /></g>,
  <g key="opening"><path d="M1 5l32-4-1 28-9 2V6l-9 2v27L3 38z" fill="#dadada" /></g>,
  <g key="stair"><path d="M0 3l22 6 4-3 12 5-9 4-7-1-1-2L0 4z" fill="#e8e8e8" /><path d="M28 12L14 32" stroke="#f0f0f0" strokeWidth="8" strokeDasharray="2.400 1" /><path d="M2 5l20 6" stroke="#ddd" strokeWidth="2" strokeDasharray="2 1" /></g>,
  <g key="railing"><path d="M1 15l36-9M4 31l34-12" stroke="#929292" /><path d="M1 14l3 18M17 10l1 16M28 7l1 14M37 4v16" stroke="#ababab" strokeWidth="1.500" /><path d="M4 15l3 15M7 14l3 15M10 13l3 14M13 12l2 14M20 10l2 13M24 9l2 12M31 8l2 12" stroke="#7a7a7a" /></g>,
  <g key="corner"><path d="M1 3l18 5 17-5-1 27-16 8L2 30z" fill="#383838" stroke="#1d1d1d" /><path d="M4 5l13 5v25L5 29zM34 5l-13 5v25l11-7z" fill="#555" stroke="#b5b5b5" /></g>,
  <g key="assembly"><path d="M1 5l34-3-2 28-3 6-5-3V8l-11 1v25L3 38z" fill="#171717" /><path d="M2 38L1 4l34-3v6M15 9v25M3 33l11-3" stroke="#ccc" /><path d="M25 9l8-1-2 28-8-4z" fill="#303030" stroke="#eee" strokeWidth="1.500" /></g>,
  <g key="curtain"><path d="M6 5l23-4-1 31-20 6z" fill="#3c3c3c" stroke="#999" /><path d="M11 4v33M16 3v32M21 2v32M25 2v31M6 20l22-4" stroke="#999" /></g>,
  <g key="space"><path d="M0 8h38v22l-19 8L0 30z" fill="#808080" /><path d="M0 7l19-6 19 6-19 6z" fill="#ababab" /><path d="M0 31l19-5 19 5-19 7z" fill="#c2c2c2" /><path d="M24 26l9 9M34 25L23 36M28.500 24v13M21 30.500h15" stroke="#cfe6ff" /><circle cx="28.500" cy="30.500" r="2.500" fill="#4f9be8" /></g>,
  <g key="slab"><path d="M0 18l28-9 11 14-21 3z" fill="#9a9a9a" /><path d="M4 18l26-6M8 20l24-5M13 22l22-4M17 24l21-3" stroke="#cfcfcf" strokeWidth=".7" /></g>,
  <g key="area">
    <path d="M1 1h11v10H1z" fill="#5e9bd6" stroke="#111" /><path d="M1 13h11v10H1z" fill="#d79a5c" stroke="#111" /><path d="M1 25h11v10H1z" fill="#c0d35c" stroke="#111" />
    <g fill="#161616" fontSize="6" fontWeight="700" fontFamily="'Liberation Sans', sans-serif"><text x="14" y="9">0 - 200</text><text x="14" y="21">201-500</text><text x="14" y="33">501-1000</text></g>
  </g>,
  <g key="grid"><path d="M1 22l9-6 14-4 13 6-13 8-18 1z" stroke="#888" strokeDasharray="1 3" /><path d="M2 22v-5M10 16v-5M17 12V7M24 12V7M30 15v-5M37 19v-5M12 25v-6M20 27v-6M27 24v-7" stroke="#444" /><path d="M1 24h2M20 33h2M10 28h2M25 31h2M37 22h2" stroke="#bbb" strokeWidth="2" /></g>,
  <g key="column"><path d="M15 3l5-1v35l-4 1z" fill="#cfcfcf" /><path d="M20 3h3v32l-3 1z" fill="#777" /><path d="M22 2h2v34h-2z" fill="#c2c2c2" /></g>,
  <g key="beam"><path d="M0 5l7-1 31 15-8 2z" fill="#efefef" /><path d="M2 8l29 14-1 10L3 12z" fill="#b5b5b5" /><path d="M0 10l30 19 7-1v3l-8 3L0 13z" fill="#e0e0e0" /><path d="M33 21v8" stroke="#555" strokeWidth="2" /></g>,
];

function ToolGrid({ items }) {
  return (
    <div className="grid grid-cols-[49px_49px_49px] gap-y-[11px] pl-[5px]">
      {items.map((t) => (
        <button key={t.key} type="button" aria-label={t.key} className="flex h-10 items-center justify-center">
          <svg width="40" height="40" viewBox="0 0 40 40" fill="none" aria-hidden="true" className="overflow-visible">{t}</svg>
        </button>
      ))}
    </div>
  );
}

function Palette() {
  const tabs = ["Annota...", "Interiors", "Roomb...", "Details"];
  const tab = "flex w-full items-center justify-center border border-[#333] text-[12px]";
  return (
    <aside aria-label="Tool palettes" className="absolute left-0 top-[181px] z-10 flex items-start">
      <div className="flex h-[325px] w-[226px] rounded-[2px] border border-[#333] bg-[#535353] py-[3px] pr-[3px]">
        <div className="flex w-[22px] flex-col items-center gap-2 pt-[3px]">
          <button type="button" aria-label="Close palette"><Icon w={10}><path d="M1 1l8 8M9 1L1 9" stroke="#c9c9c9" strokeWidth="2" /></Icon></button>
          <button type="button" aria-label="Auto-hide"><Icon w={10}><path d="M1.500 0v10M8.500 1v8M3 5l5-3v6z" fill="#c9c9c9" stroke="#c9c9c9" /></Icon></button>
          <button type="button" aria-label="Palette menu"><Icon w={11} vb="0 0 10 10"><circle cx="5" cy="5" r="2.300" stroke="#c9c9c9" strokeWidth="1.200" /><path d="M5 0v2.500M5 7.500V10M0 5h2.500M7.500 5H10M1.500 1.500l2 2M6.500 6.500l2 2M8.500 1.500l-2 2M1.500 8.500l2-2" stroke="#c9c9c9" strokeWidth="1.200" /></Icon></button>
          <h2 className="mt-auto rotate-180 whitespace-nowrap text-[12px] leading-4 text-[#a9b3b8] [writing-mode:vertical-rl]">TOOL PALETTES - DESIGN</h2>
          <Icon w={12} h={13} className="mb-px"><path d="M.5.500h11v10h-2v2h-9z" stroke="#ddd" /><path d="M2 4h8M2 7h7M2 10h6" stroke="#ddd" strokeDasharray="2 1" /></Icon>
        </div>
        <div className="flex flex-1 rounded-[3px] border border-[#2f2f2f] bg-[#5a5a5a]">
          <div className="ml-1 mt-[6px] h-[188px] w-[5px] rounded-full bg-[#434343]" />
          <div className="ml-[8px] mt-[11px] w-[174px]">
            <ToolGrid items={tools.slice(0, 9)} />
            <div className="mt-[14px] border-t border-white" />
            <div className="mt-[17px]"><ToolGrid items={tools.slice(9, 12)} /></div>
            <div className="mt-[14px] border-t border-white" />
            <div className="mt-[16px]"><ToolGrid items={tools.slice(12)} /></div>
          </div>
        </div>
      </div>
      <div className="-ml-1 mt-[3px] flex w-[21px] flex-col bg-[#535353]">
        <button type="button" className={`${tab} h-[57px] border-l-0 bg-[#5a5a5a] text-white`}><span className="rotate-180 [writing-mode:vertical-rl]">Design</span></button>
        {tabs.map((t) => (
          <button key={t} type="button" className={`${tab} h-[57px] border-t-0 text-[#b5b5b5]`}><span className="rotate-180 [writing-mode:vertical-rl]">{t}</span></button>
        ))}
        <div className="h-[5px] border-x border-b border-[#333]" />
        <div className="h-[5px] border-x border-b border-[#333]" />
        <div className="h-[4px] rounded-b border-x border-b border-[#333]" />
      </div>
    </aside>
  );
}

/* ---------- Command line and status ---------- */
function CommandRow() {
  return (
    <div className="relative h-6 border-t border-black bg-gradient-to-b from-[#9a9a9a] to-[#7b7b7b]">
      <div className="absolute -top-[3px] bottom-px left-[378px] right-[378px] flex">
        <div className="flex w-[53px] items-center bg-gradient-to-b from-[#808080] to-[#555] pl-1">
          <Icon w={5} h={17}><path d="M1 0v17M4 0v17" stroke="#b5b5b5" strokeWidth="2" strokeDasharray="2 1" /></Icon>
          <button type="button" aria-label="Close command line" className="ml-[5px]"><Icon w={10}><path d="M1 1l8 8M9 1L1 9" stroke="#e8e8e8" strokeWidth="2" /></Icon></button>
          <button type="button" aria-label="Customize command line" className="ml-[10px]"><Icon w={14}><path d="M1 4l3 1 1-1-1-3c3-1 5 2 4 5l5 5c1 2-1 3-2 2L6 8C3 9 0 7 1 4z" fill="#e4e4e4" stroke="#444" strokeWidth=".6" /></Icon></button>
        </div>
        <div className="flex flex-1 items-center rounded-r-[2px] bg-gradient-to-b from-[#dcdcdc] to-[#c4c4c4] pl-[5px] pr-1">
          <button type="button" aria-label="Recent commands" className="flex items-center gap-1">
            <Icon w={15} h={14}><rect x=".5" y=".5" width="14" height="13" rx="1" fill="#c3c9d2" stroke="#777" /><path d="M3 4l3 3-3 3M8 10.500h4" stroke="#333" /></Icon>
            <Icon w={6} h={4}><path d="M0 0h6L3 4z" fill="#777" /></Icon>
          </button>
          <input aria-label="Command" placeholder="Type a command" className="ml-1.5 min-w-0 flex-1 bg-transparent font-['DejaVu_Sans_Mono'] text-[11px] italic text-[#777] outline-none placeholder:text-[#7d7d7d]" />
          <Icon w={7} h={5}><path d="M0 5h7L3.500 0z" fill="#444" /></Icon>
        </div>
      </div>
      <div className="absolute bottom-0 right-0 top-0 flex w-[6px] items-center justify-center bg-[#d0d0d0]">
        <Icon w={6} h={4}><path d="M0 0h6L3 4z" fill="#111" /></Icon>
      </div>
    </div>
  );
}

const layoutTabs = [
  ["Model", "w-[61px]"], ["Layout1", "w-[60px]"], ["A4 Landscape", "w-[103px]"],
  ["A4 portrait", "w-[76px]"], ["A3 landscape", "w-[95px]"], ["A3 portrait", "w-[76px]"],
];

function LayoutTab({ label, width, active }) {
  const f = active ? "#7b7b7b" : "#555";
  const s = active ? "#999" : "#6a6a6a";
  return (
    <button type="button" className={`relative flex h-[18px] items-center justify-center whitespace-nowrap pb-px ${width} ${active ? "font-bold text-white" : "text-[#b9b9b9]"}`}>
      <svg className="absolute inset-y-0 left-0 h-full w-3" viewBox="0 0 12 18" preserveAspectRatio="none" aria-hidden="true">
        <path d="M0 0c5 2 4 17 10 17h2V0z" fill={f} /><path d="M0 0c5 2 4 17 10 17h2" fill="none" stroke={s} />
      </svg>
      <span className={`absolute inset-y-0 left-3 right-3 border-b ${active ? "border-[#999] bg-[#7b7b7b]" : "border-[#6a6a6a] bg-[#555]"}`} />
      <svg className="absolute inset-y-0 right-0 h-full w-3" viewBox="0 0 12 18" preserveAspectRatio="none" aria-hidden="true">
        <path d="M12 0c-5 2-4 17-10 17H0V0z" fill={f} /><path d="M12 0c-5 2-4 17-10 17H0" fill="none" stroke={s} />
      </svg>
      <span className="relative">{label}</span>
    </button>
  );
}

const Cell = ({ w, label, children }) => (
  <button type="button" aria-label={label} className={`flex h-full items-center justify-center ${w}`}>{children}</button>
);
const Group = ({ children, className = "" }) => (
  <div className={`flex h-[26px] items-center border border-[#8a8a8a] bg-[#4f4f4f] ${className}`}>{children}</div>
);
const Down = () => <Icon w={6} h={5}><path d="M0 0h6L3 5z" fill="#fff" /></Icon>;
const G = "#bdbdbd";
const B = "#2c8cf4";

function StatusBar() {
  return (
    <div className="flex h-7 items-center gap-px pr-[2px] text-white">
      <Group><Cell w="w-[42px]">PAPER</Cell></Group>
      <Group>
        <Cell w="w-[26px]" label="Ortho"><Icon w={16}><path d="M2 0v14.500h13M2 8.500h5v6" stroke={B} strokeWidth="1.500" /></Icon></Cell>
        <Cell w="w-[22px]" label="Polar"><Icon w={16}><circle cx="8" cy="8" r="6" stroke={G} strokeWidth="1.300" /><path d="M8 8h8M8 8l5-6" stroke={G} strokeWidth="1.300" /></Icon></Cell>
        <Cell w="w-[16px]" label="Polar options"><Down /></Cell>
        <Cell w="w-[24px]" label="Isometric"><Icon w={16} h={18}><path d="M1 2l14 15M8 0v6M8 11v7" stroke={G} strokeWidth="1.500" /></Icon></Cell>
        <Cell w="w-[14px]" label="Isometric options"><Down /></Cell>
      </Group>
      <Group>
        <Cell w="w-[24px]" label="Object snap tracking"><Icon w={16}><path d="M15 1L2 14.500h13" stroke={B} strokeWidth="1.500" /><circle cx="8" cy="8" r="2" fill={B} /></Icon></Cell>
        <Cell w="w-[24px]" label="Object snap"><Icon w={16}><path d="M3 3.500h11v11H3z" stroke={B} strokeWidth="1.500" /><path d="M1 1h4v4H1z" fill="#00e000" stroke="#111" /></Icon></Cell>
        <Cell w="w-[14px]" label="Object snap options"><Down /></Cell>
      </Group>
      <Group>
        <Cell w="w-[24px]" label="Annotation monitor"><Icon w={16}><path d="M.5.5h11M.5.5v15h2M.5.5h15v3" stroke={G} strokeDasharray="2 1" /><path d="M4.500 4.500h11v11h-11zM7.500 7.500h5v5h-5z" stroke={G} /></Icon></Cell>
        <Cell w="w-[24px]" label="Annotation scale"><Icon w={16}><path d="M7 1l1 6 5 7-3 1-3-4-4 4H1l4-6V3z" fill={G} /><circle cx="12" cy="4" r="3" stroke={G} strokeWidth="1.500" /></Icon></Cell>
        <Cell w="w-[24px]" label="Auto scale"><Icon w={16}><path d="M7 1l1 6 5 7-3 1-3-4-4 4H1l4-6V3z" fill={G} /><path d="M9 6l4-5v4h3l-5 5" stroke={G} strokeWidth="1.500" /></Icon></Cell>
      </Group>
      <Group>
        <Cell w="w-[23px]" label="Workspace settings"><Icon w={14}><circle cx="7" cy="7" r="4" stroke={G} strokeWidth="3" /><path d="M7 0v3M7 11v3M0 7h3M11 7h3M2 2l2 2M10 10l2 2M12 2l-2 2M4 10l-2 2" stroke={G} strokeWidth="2" /></Icon></Cell>
        <Cell w="w-[15px]" label="Workspace options"><Down /></Cell>
        <span className="h-full w-px bg-[#8a8a8a]" />
        <Cell w="w-[25px]" label="Crosshair"><Icon w={14}><path d="M7 0v14M0 7h14" stroke={G} strokeWidth="2" /></Icon></Cell>
      </Group>
      <Group>
        <Cell w="w-[24px]" label="Elevation mode"><Icon w={17}><path d="M5 5l5-2 5 2v7l-5 3V8L5 5M10 8l5-3" stroke={G} /><path d="M1 1h4L1 5h4" stroke={G} /><path d="M1 12h4v4H1z" fill="#00e000" stroke="#111" /></Icon></Cell>
        <span className="h-full w-px bg-[#8a8a8a]" />
        <Cell w="w-[45px]">+0.000</Cell>
      </Group>
      <Group><Cell w="w-[24px]" label="Replace Z"><Icon w={18}><circle cx="9" cy="9" r="8" fill="#06529c" stroke={B} strokeWidth="1.500" /><path d="M8 12l5-4" stroke="#9fd0ff" /></Icon></Cell></Group>
      <Group><Cell w="w-[21px]" label="Plot notification"><Icon w={16}><circle cx="5" cy="6" r="4" stroke={G} strokeWidth="2" strokeDasharray="2 1" /><path d="M10.500 4l6 12h-12z" fill="#e8641b" /><path d="M10.500 8v4M10.500 13v1.500" stroke="#fff" /></Icon></Cell></Group>
      <Group>
        <Cell w="w-[25px]" label="Clean screen"><Icon w={16} h={14}><path d="M.5 1.500h15v11H.5z" stroke="#ddd" /><path d="M9 4h4v3M13 4L9.500 6.500M7 10H3V7M3 10l3.500-2.500" stroke="#ddd" /></Icon></Cell>
        <Cell w="w-[23px]" label="Customization"><Icon w={15} h={13}><path d="M0 1h15M0 6.500h15M0 12h15" stroke={G} strokeWidth="2" /></Icon></Cell>
      </Group>
    </div>
  );
}

function BottomRow() {
  return (
    <div className="flex h-[30px] items-start justify-between bg-[#383838] pl-[9px]">
      <nav aria-label="Layouts" className="flex">
        {layoutTabs.map(([l, w]) => (
          <LayoutTab key={l} label={l} width={w} active={l === "A4 Landscape"} />
        ))}
        <button type="button" aria-label="New layout" className="ml-1.5 flex h-4 w-[22px] items-center justify-center rounded-br-[12px] rounded-tl-[12px] border border-[#666] bg-[#4c4c4c]">
          <Icon w={7}><path d="M3.500 0v7M0 3.500h7" stroke="#ccc" strokeWidth="2" /></Icon>
        </button>
      </nav>
      <StatusBar />
    </div>
  );
}

/* ---------- Balloons ---------- */
function TipBalloon() {
  return (
    <div role="dialog" aria-label="Match Properties" className="absolute right-[132px] top-[42px] z-20 h-[143px] w-[254px] rounded-[4px] border border-[#777] bg-gradient-to-b from-white via-white to-[#e6e6e6] text-black">
      <svg width="24" height="13" className="absolute -top-[12px] right-[13px]" aria-hidden="true"><path d="M0 13L12 1l12 12z" fill="#fff" /></svg>
      <div className="flex pl-[10px] pt-[10px]">
        <Icon w={15} h={24}>
          <path d="M7.500.5c4 0 7 3 7 6.500 0 4-4 5-4 8.500h-6C4.500 12 .5 11 .5 7c0-3.500 3-6.500 7-6.500z" fill="#ffe9a6" stroke="#777" />
          <path d="M4 4q2-2 4-2" stroke="#fff" strokeWidth="2" />
          <path d="M4.500 15.500h6v5h-6z" fill="#cfd3da" stroke="#444" /><path d="M5 21h5l-1 3H6z" fill="#333" />
        </Icon>
        <div className="ml-[11px] text-[11px]">
          <h2 className="text-[11px] font-bold leading-4">Match Properties</h2>
          <p className="whitespace-nowrap pl-[3px] leading-[15px]">
            Did you know that you can match<br />the styles and the object display<br />properties of AutoCAD<br />Architecture objects in addition to<br />their basic AutoCAD properties<br />such as layer, color and linetype?
          </p>
          <a href="#tips" className="text-[#0000ee] underline leading-[17px]">Don't show me this again</a>
        </div>
      </div>
      <button type="button" aria-label="Close tip" className="absolute right-[7px] top-[5px]">
        <Icon w={11}><circle cx="5.500" cy="5.500" r="5.500" fill="#6d6d6d" /><path d="M3.500 3.500l4 4M7.500 3.500l-4 4" stroke="#fff" strokeWidth="1.300" /></Icon>
      </button>
      <button type="button" aria-label="More" className="absolute bottom-[9px] right-[11px]">
        <Icon w={12} h={8}><path d="M0 0h12L6 8z" fill="#555" /></Icon>
      </button>
    </div>
  );
}

function PlotBalloon() {
  return (
    <div role="dialog" aria-label="Plot and Publish Job Complete" className="absolute bottom-[82px] right-[17px] z-20 h-[81px] w-[247px] rounded-[14px] border border-black bg-[#ffffe1] text-black">
      <svg width="22" height="19" className="absolute -bottom-[18px] left-[170px]" aria-hidden="true"><path d="M1 0l18 17V0" fill="#ffffe1" /><path d="M1 1l18 17V1" fill="none" stroke="#000" /></svg>
      <div className="flex items-center pl-2 pr-2 pt-[9px]">
        <Icon w={16} h={14}><path d="M8 .5l7.500 13H.5z" fill="#ffd42a" stroke="#b59b4a" /><path d="M8 5v4M8 10.500v1.500" stroke="#222" strokeWidth="1.500" /></Icon>
        <h2 className="ml-[11px] flex-1 whitespace-nowrap text-[11px] font-bold leading-4">Plot and Publish Job Complete</h2>
        <button type="button" aria-label="Close notification" className="flex h-4 w-4 items-center justify-center border border-[#888] bg-[#f4f4ee]">
          <Icon w={8}><path d="M0 0l8 8M8 0L0 8" stroke="#000" strokeWidth="2" /></Icon>
        </button>
      </div>
      <p className="pl-[15px] pt-[6px] leading-4">Errors and warnings found</p>
      <a href="#details" className="ml-[15px] mt-[5px] block w-max whitespace-nowrap leading-4 text-[#0000ee] underline">Click to view plot and publish details...</a>
    </div>
  );
}

/* ---------- Taskbar ---------- */
function Taskbar() {
  const btn = "flex h-[38px] items-center justify-center rounded-[2px] border";
  return (
    <footer className="flex h-[39px] items-center border-t border-[#6c7378] bg-gradient-to-r from-[#06090d] via-[#12171c] to-[#07090c] text-white">
      <button type="button" aria-label="Start" className="flex w-[54px] justify-center">
        <Icon w={38}>
          <circle cx="19" cy="19" r="18" fill="url(#orb)" stroke="#7fa0b5" />
          <path d="M9 12q5-3 9 0l-1 7q-5-3-9 0z" fill="#e8552b" /><path d="M20 13q4 2 9 0l-1 7q-5 2-9 0z" fill="#8cc63e" />
          <path d="M8 21q4-3 9 0l-1 6q-4-2-9 0z" fill="#3c9be6" /><path d="M19 22q4 2 9 0l-1 6q-4 3-9 0z" fill="#ffc727" />
        </Icon>
      </button>
      <button type="button" aria-label="Internet Explorer" className="flex w-[68px] justify-center pl-0.5">
        <Icon w={32}>
          <path d="M26 19H10c0 7 9 7 10 3h6c-3 10-20 9-21-4C5 4 26 2 26 19zM10 15h10c-1-6-9-6-10 0z" fill="#4bbcf2" stroke="#a5e2ff" strokeWidth=".6" />
          <path d="M4 29C-2 24 12 4 28 3c3 0 2 4 1 6 0-4-3-4-8-1C11 13 4 23 7 27z" fill="#f6c81c" />
        </Icon>
      </button>
      <button type="button" aria-label="File Explorer" className={`${btn} w-[58px] border-[#a5abb0] bg-gradient-to-br from-[#777d82] via-[#2b3135] to-[#3b4145]`}>
        <Icon w={34} h={32}>
          <path d="M2 4h9l2 2h17v23H2z" fill="#e8cd6b" /><path d="M4 9h28v20H4z" fill="#f7e6a0" stroke="#d9bd5c" />
          <path d="M5 3h3v2H5z" fill="#1a9a28" /><path d="M14 5h3v2h-3z" fill="#d84a27" /><path d="M22 8h3v2h-3z" fill="#2a7ad8" />
          <path d="M7 31v-8q0-3 3-3h15q3 0 3 3v8h-5v-6H12v6z" fill="#8fd0ef" stroke="#4a9cc9" />
        </Icon>
      </button>
      <button type="button" aria-label="Media Player" className="flex w-[64px] justify-center">
        <Icon w={28}><path d="M8 3h18v22H8z" fill="#4f8fbd" /><path d="M5 2h18v24H5z" fill="#6aa7d2" stroke="#b5d8ee" strokeWidth=".7" /><path d="M1 2h19v24H1z" fill="#8fc2e4" stroke="#c9e5f5" strokeWidth=".7" /><circle cx="12" cy="14" r="9" fill="#f07a1d" stroke="#fff" /><path d="M9 8l9 6-9 6z" fill="#fff" /></Icon>
      </button>
      <button type="button" aria-label="Chrome" className="flex w-[63px] justify-center">
        <Icon w={28}>
          <circle cx="14" cy="14" r="14" fill="#3fae49" /><path d="M14 14L1.900 7A14 14 0 0 1 26.600 8z" fill="#e33b2e" /><path d="M14 14L26.800 8A14 14 0 0 1 13 28z" fill="#fbd03b" />
          <circle cx="14" cy="14" r="6.500" fill="#fff" /><circle cx="14" cy="14" r="5" fill="#3b7de0" />
        </Icon>
      </button>
      <button type="button" aria-label="AutoCAD" className={`${btn} w-[51px] border-[#dadcde] bg-gradient-to-br from-[#e4e6e8] via-[#a5a9ac] to-[#85898c]`}>
        <Icon w={32}>
          <rect width="32" height="32" fill="#f3dfe0" /><path d="M0 32L32 12v20z" fill="#e2b7ba" /><path d="M15 2h2l10 20-6 2-3-5h-5l-3 5-6-1z" fill="url(#redA)" />
          <rect x="26" y="25" width="5" height="6" fill="#ddd" /><path d="M27 30v-4h3v4M27 28h3" stroke="#222" />
        </Icon>
      </button>
      <span className="mr-1 flex h-[38px] w-[8px] gap-px">
        <span className="w-[3px] rounded-r border-r border-[#aaa] bg-[#5c6164]" /><span className="w-[3px] rounded-r border-r border-[#888] bg-[#34393c]" />
      </span>
      <button type="button" aria-label="SketchUp" className={`${btn} w-[58px] border-[#a5abb0] bg-gradient-to-br from-[#777d82] via-[#2b3135] to-[#3b4145]`}>
        <Icon w={32}>
          <path d="M2 5l17-4 11 6v16l-12 9-12-4-1-9-3-3z" fill="#e8302c" />
          <path d="M4 6l13-2 9 5v5l-7-5-13 2zM6 13l9-1 6 4v6l-5-4-9 1zM9 22l5-1v7l-5-2z" fill="#fff" />
        </Icon>
      </button>
      <div className="ml-auto flex items-center">
        <Icon w={8} h={5} className="mr-[14px]"><path d="M0 5h8L4 0z" fill="#e8e8e8" /></Icon>
        <Icon w={15} h={16} className="mr-2"><path d="M1.500 0v16" stroke="#fff" strokeWidth="2" /><path d="M3 1q3-1 5 1 3 1 6 0v7q-3 1-6 0-2-2-5-1z" fill="#f4f4f4" stroke="#444" strokeWidth=".6" /></Icon>
        <Icon w={16} className="mr-2"><path d="M5.500 4.500h9v7h-9z" stroke="#fff" strokeWidth="1.500" /><path d="M10 12v2M7 15h7M1 1v3h4V1M3 4v9h2" stroke="#fff" strokeWidth="1.300" /></Icon>
        <Icon w={16} className="mr-4"><path d="M1 5h3l5-4v14l-5-4H1z" fill="#fff" /><circle cx="11" cy="11" r="4.500" fill="#d8201c" /><path d="M9 9l4 4M13 9l-4 4" stroke="#fff" strokeWidth="1.500" /></Icon>
        <time className="flex w-[52px] flex-col items-center whitespace-nowrap text-[12px] leading-[17px]"><span>11:34 AM</span><span>3/5/2015</span></time>
        <button type="button" aria-label="Show desktop" className="ml-[11px] h-[38px] w-[13px] border border-[#6c7378] bg-gradient-to-b from-[#5c6266] to-[#15191c]" />
      </div>
    </footer>
  );
}

export default function App() {
  return (
    <div className="relative flex h-screen min-h-[700px] w-full flex-col overflow-hidden bg-black font-['Open_Sans',sans-serif] text-[11px]">
      <Defs />
      <div className="mx-[3px] mb-[2px] mt-[3px] flex min-h-0 flex-1 flex-col rounded-t-lg border border-[#a2a8ac] bg-[linear-gradient(to_bottom,#6a6e71_0%,#1d2428_13%,#c0c4c6_27%,#0b1014_27%)]">
        <TitleBar />
        <div className="mx-1 mb-[3px] flex min-h-0 flex-1 flex-col border border-[#8d9296]">
          <div className="flex min-h-0 flex-1 flex-col border border-[#222]">
            <RibbonTabs />
            <Ribbon />
            <FileTabs />
            <Workspace />
            <CommandRow />
            <BottomRow />
          </div>
        </div>
      </div>
      <Taskbar />
      <AppButton />
      <Palette />
      <TipBalloon />
      <PlotBalloon />
    </div>
  );
}
